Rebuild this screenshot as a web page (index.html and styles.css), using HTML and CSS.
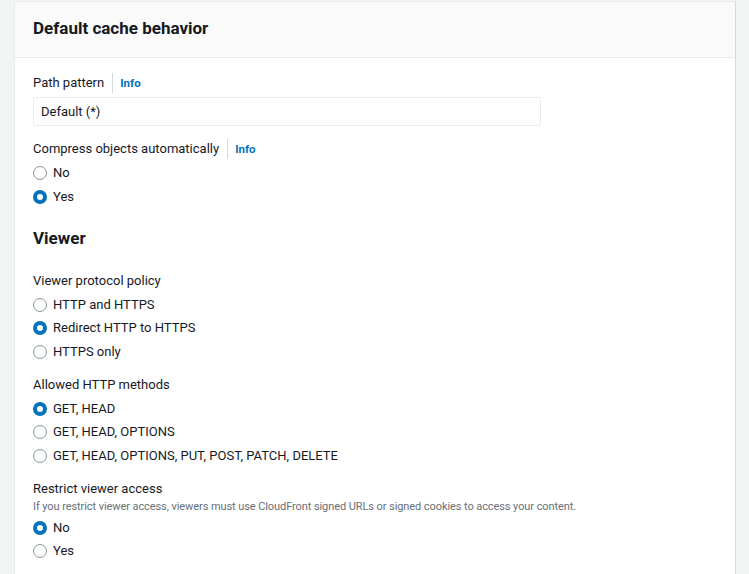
FILE: index.html
```html
<!DOCTYPE html>
<html>
<head>
<meta charset="utf-8">
<link rel="stylesheet" href="styles.css">
</head>
<body>
<div class="card">
  <div class="card-header">
    <h2 class="title">Default cache behavior</h2>
  </div>
  <div class="card-body">
    <div class="field">
      <div class="label">Path pattern<span class="sep"></span><a class="info">Info</a></div>
      <div class="input">Default (*)</div>
    </div>
    <div class="field">
      <div class="label">Compress objects automatically<span class="sep"></span><a class="info">Info</a></div>
      <div class="radios">
        <div class="radio"><span class="dot"></span>No</div>
        <div class="radio"><span class="dot on"></span>Yes</div>
      </div>
    </div>
    <h3 class="section">Viewer</h3>
    <div class="field">
      <div class="label">Viewer protocol policy</div>
      <div class="radios">
        <div class="radio"><span class="dot"></span>HTTP and HTTPS</div>
        <div class="radio"><span class="dot on"></span>Redirect HTTP to HTTPS</div>
        <div class="radio"><span class="dot"></span>HTTPS only</div>
      </div>
    </div>
    <div class="field">
      <div class="label">Allowed HTTP methods</div>
      <div class="radios">
        <div class="radio"><span class="dot on"></span>GET, HEAD</div>
        <div class="radio"><span class="dot"></span>GET, HEAD, OPTIONS</div>
        <div class="radio"><span class="dot"></span>GET, HEAD, OPTIONS, PUT, POST, PATCH, DELETE</div>
      </div>
    </div>
    <div class="field">
      <div class="label">Restrict viewer access</div>
      <div class="desc">If you restrict viewer access, viewers must use CloudFront signed URLs or signed cookies to access your content.</div>
      <div class="radios">
        <div class="radio"><span class="dot on"></span>No</div>
        <div class="radio"><span class="dot"></span>Yes</div>
      </div>
    </div>
  </div>
</div>
</body>
</html>
```

FILE: styles.css
```css
html, body {
  margin: 0;
  padding: 0;
  background: #f2f3f3;
  font-family: Roboto, "Liberation Sans", sans-serif;
  color: #16191f;
  font-size: 13px;
}
body {
  padding: 1px 13px 0 14px;
  height: 573px;
  overflow: hidden;
}
.card {
  background: #ffffff;
  border: 1px solid #eaeded;
  border-right-color: #d5dbdb;
  height: 600px;
}
.card-header {
  background: #fafafa;
  border-bottom: 1px solid #eaeded;
  height: 56px;
  padding: 0 18px 3px;
  box-sizing: border-box;
  display: flex;
  align-items: center;
}
.title {
  margin: 0;
  font-size: 17px;
  font-weight: 700;
  line-height: 22px;
}
.card-body {
  padding: 14px 18px 0;
}
.field {
  margin-bottom: 12px;
}
.label {
  line-height: 22px;
  display: flex;
  align-items: center;
}
.sep {
  display: inline-block;
  width: 1px;
  height: 20px;
  background: #d5dbdb;
  margin: 0 7px 0 8px;
}
.info {
  color: #0073bb;
  font-weight: 700;
  font-size: 11.5px;
}
.input {
  margin-top: 3px;
  width: 492px;
  height: 27px;
  border: 1px solid #eaeded;
  border-radius: 2px;
  padding: 0 7px;
  line-height: 27px;
}
.radios {
  margin-top: 3px;
}
.radio {
  display: flex;
  align-items: center;
  height: 20px;
  line-height: 20px;
  margin-bottom: 3.5px;
}
.dot {
  box-sizing: border-box;
  width: 14px;
  height: 14px;
  border-radius: 50%;
  border: 1.5px solid #879596;
  margin-right: 6px;
  background: #fff;
}
.dot.on {
  border: 4px solid #0073bb;
}
.section {
  margin: 19px 0 20px;
  font-size: 17px;
  font-weight: 700;
  line-height: 24px;
}
.desc {
  font-size: 11px;
  line-height: 14px;
  letter-spacing: -0.08px;
  color: #687078;
}
.desc + .radios {
  margin-top: 4px;
}
```
